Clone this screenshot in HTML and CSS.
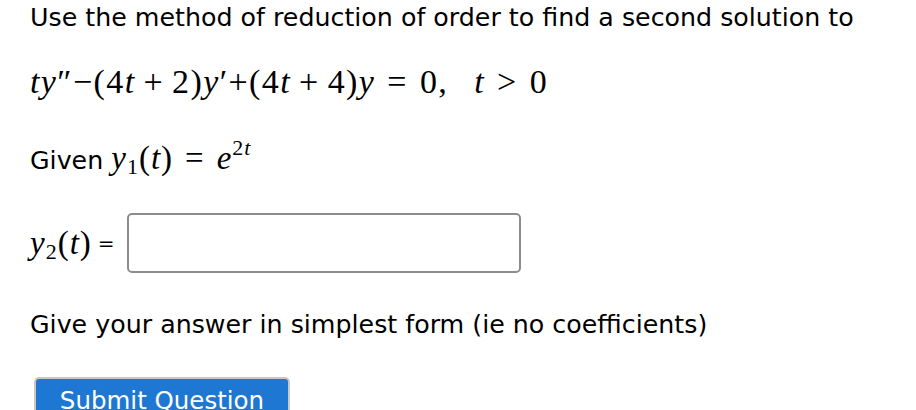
FILE: index.html
```html
<!DOCTYPE html>
<html>
<head>
<meta charset="utf-8">
<link rel="stylesheet" href="styles.css">
</head>
<body>
<div class="page">
  <p class="line first">Use the method of reduction of order to find a second solution to</p>
  <p class="math-line"><span class="m big"><i>t</i><i>y</i>″−(4<i>t</i><span class="op">+</span>2)<i>y</i>′+(4<i>t</i><span class="op">+</span>4)<i>y</i><span class="rel">=</span>0,<span class="gap"></span><i>t</i><span class="rel">&gt;</span>0</span></p>
  <p class="line given">Given <span class="m"><i>y</i><span class="sub">1</span>(<i>t</i>)<span class="rel">=</span><i>e</i><sup class="sup">2<i>t</i></sup></span></p>
  <div class="answer-row">
    <span class="m"><i>y</i><span class="sub">2</span>(<i>t</i>)</span>
    <span class="eq">=</span>
    <span class="input"></span>
  </div>
  <p class="line hint">Give your answer in simplest form (ie no coefficients)</p>
  <button class="btn">Submit Question</button>
</div>
</body>
</html>
```
FILE: styles.css
```css
html, body {
  margin: 0;
  padding: 0;
  background: #fff;
  overflow: hidden;
}
.page {
  padding: 0 0 0 30px;
  font-family: "DejaVu Sans", Verdana, sans-serif;
  font-size: 25.3px;
  color: #000;
}
.line {
  margin: 0;
  line-height: 36px;
}
.m {
  font-family: "Liberation Serif", "Times New Roman", serif;
  font-size: 33px;
  letter-spacing: 1px;
}
.big {
  font-size: 34px;
  letter-spacing: 1.4px;
}
.m i {
  font-style: italic;
}
.op {
  margin: 0 8px;
}
.rel {
  margin: 0 12px;
}
.gap {
  display: inline-block;
  width: 26px;
}
.math-line {
  margin: 28px 0 0 0;
  line-height: 36px;
}
.sub {
  font-size: 22px;
  position: relative;
  top: 5px;
}
.sup {
  font-size: 22px;
  vertical-align: 14px;
  line-height: 0;
}
.given {
  margin-top: 37px;
}
.answer-row {
  display: flex;
  align-items: center;
  margin-top: 33px;
  height: 60px;
}
.eq {
  margin: 0 12px 0 6px;
  font-size: 20px;
}
.input {
  display: block;
  width: 390px;
  height: 56px;
  border: 2px solid #8c8c8c;
  border-radius: 5px;
}
.hint {
  margin-top: 34px;
}
.btn {
  display: block;
  margin: 34px 0 0 4px;
  width: 256px;
  height: 44px;
  background: #1f77d4;
  color: #fff;
  border: 2px solid #c8c8c8;
  border-radius: 5px;
  font-family: "DejaVu Sans", Verdana, sans-serif;
  font-size: 24.5px;
  padding: 0;
  text-align: center;
  line-height: 44px;
}
```
